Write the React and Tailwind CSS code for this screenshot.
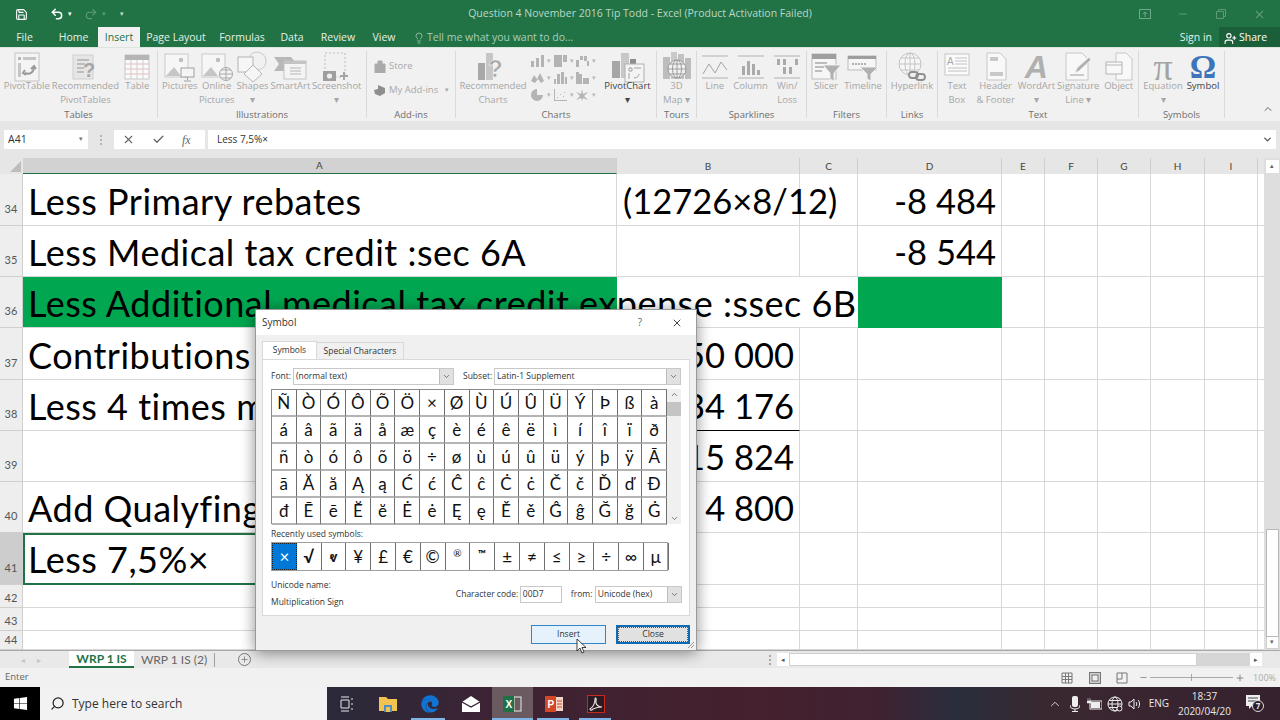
import { Save, Undo2, Redo2, Lightbulb, UserPlus, X, Check, ChevronDown, ChevronUp, Search, Plus, Minus } from 'lucide-react';
import { FaEdge, FaWindows } from 'react-icons/fa';

const UI = "font-['Open_Sans',sans-serif]";
const CALIBRI = "font-['Lato','Noto_Sans',sans-serif]";
const COLS = 'grid grid-cols-[23px_594px_183px_58px_144px_43px_53px_53px_54px_53px_6px]';

function Ico({ children, w = 32, h = 32 }) {
  return (
    <svg width={w} height={h} viewBox={`0 0 ${w} ${h}`} fill="none" stroke="#bcbcbc" strokeWidth="1">
      {children}
    </svg>
  );
}

const PivotTableIcon = () => (
  <Ico>
    <rect x="4" y="2" width="24" height="28" fill="#f4f4f4" stroke="#c4c4c4" />
    <rect x="7" y="6" width="3" height="3" fill="#b8b8b8" stroke="none" />
    <rect x="12" y="6" width="13" height="3" fill="#c6c6c6" stroke="none" />
    <rect x="7" y="12" width="3" height="14" fill="#c6c6c6" stroke="none" />
    <path d="M14 22c5 2 9-1 9-6m-3 2 3-3 2 3M14 19l-2 3 3 2" stroke="#9a9a9a" strokeWidth="2" />
  </Ico>
);
const RecPivotIcon = () => (
  <Ico>
    <rect x="4" y="4" width="20" height="24" fill="#e6e6e6" stroke="#cfcfcf" />
    <path d="M8 9h12M8 13h8M8 17h7M8 21h7" stroke="#bdbdbd" strokeWidth="2" />
    <text x="14" y="26" fontSize="20" fontWeight="700" fill="#a6a6a6" stroke="none" fontFamily="Liberation Sans">?</text>
  </Ico>
);
const TableIcon = () => (
  <Ico>
    <rect x="4" y="4" width="24" height="24" fill="#fafafa" stroke="#c8c8c8" />
    <rect x="4" y="4" width="24" height="5" fill="#b5b5b5" stroke="none" />
    <path d="M4 13h24M4 18h24M4 23h24" stroke="#e3bcbc" />
    <path d="M10 9v19M16 9v19M22 9v19" stroke="#cfcfcf" />
  </Ico>
);
const PicturesIcon = ({ globe }) => (
  <Ico w={36} h={32}>
    <rect x="3" y="3" width="23" height="23" fill="#f6f6f6" stroke="#cacaca" />
    <path d="M4 25l8-9 7 9z" fill="#c6c6c6" stroke="none" />
    <circle cx="19" cy="9" r="2.2" fill="#bdbdbd" stroke="none" />
    {globe ? (
      <g stroke="#a8a8a8">
        <circle cx="27" cy="23" r="6.5" fill="#f4f4f4" />
        <path d="M20.5 23h13M27 16.5v13M22 19h10M22 27h10" />
      </g>
    ) : (
      <g stroke="#a0a0a0">
        <rect x="19" y="17" width="13" height="9" fill="#f4f4f4" />
        <path d="M25.5 26v3M22 30h7" />
      </g>
    )}
  </Ico>
);
const ShapesIcon = () => (
  <Ico w={36} h={32}>
    <rect x="3" y="6" width="15" height="15" fill="#f6f6f6" stroke="#b4b4b4" />
    <path d="M21 19a9 9 0 1 0-7-13" stroke="#c8c8c8" />
    <path d="M18 14l9 9-9 8-9-8z" fill="#f6f6f6" stroke="#b4b4b4" />
  </Ico>
);
const SmartArtIcon = () => (
  <Ico w={36} h={32}>
    <path d="M2 6h17l6 7-6 7H2l5-7z" fill="#b8b8b8" stroke="none" />
    <rect x="12" y="10" width="22" height="18" fill="#f4f4f4" stroke="#c4c4c4" />
    <rect x="12" y="10" width="22" height="3" fill="#c4c4c4" stroke="none" />
    <path d="M18 17h11M18 20h11M18 23h11" stroke="#b4b4b4" />
  </Ico>
);
const ScreenshotIcon = () => (
  <Ico w={36} h={32}>
    <rect x="6" y="2" width="20" height="24" stroke="#bcbcbc" strokeDasharray="2 2" />
    <rect x="4" y="20" width="13" height="10" fill="#9e9e9e" stroke="none" />
    <circle cx="10.5" cy="25" r="2.6" fill="#f1f1f1" stroke="none" />
    <path d="M21 25h8M25 21v8" stroke="#a6a6a6" strokeWidth="2" />
  </Ico>
);
const ChartsIcon = () => (
  <Ico>
    <rect x="1" y="12" width="7" height="17" fill="#a8a8a8" stroke="none" />
    <rect x="9" y="2" width="7" height="27" fill="#c6c6c6" stroke="none" />
    <text x="11" y="26" fontSize="24" fontWeight="700" fill="#a6a6a6" stroke="#f1f1f1" strokeWidth="0.6" fontFamily="Liberation Sans">?</text>
  </Ico>
);
const PivotChartIcon = () => (
  <Ico w={36} h={32}>
    <rect x="2" y="10" width="8" height="17" fill="#a6a6a6" stroke="none" />
    <rect x="11" y="2" width="8" height="25" fill="#c8c8c8" stroke="none" />
    <rect x="20" y="8" width="6" height="10" fill="#8e8e8e" stroke="none" />
    <rect x="15" y="13" width="19" height="18" fill="#f4f4f4" stroke="#b0b0b0" />
    <path d="M19 17h3v3h-3zM24 17h7M19 22v6M24 27c3 0 5-2 5-4" stroke="#a0a0a0" />
  </Ico>
);
const MapIcon = () => (
  <Ico>
    <rect x="2" y="6" width="7" height="22" fill="#bdbdbd" stroke="none" />
    <rect x="10" y="1" width="6" height="27" fill="#c9c9c9" stroke="none" />
    <rect x="17" y="3" width="6" height="25" fill="#c2c2c2" stroke="none" />
    <rect x="24" y="7" width="6" height="21" fill="#bdbdbd" stroke="none" />
    <g stroke="#9c9c9c">
      <circle cx="16" cy="18" r="9" fill="#f1f1f1" />
      <path d="M7 18h18M16 9v18M9 13h14M9 23h14" />
      <ellipse cx="16" cy="18" rx="4.5" ry="9" />
    </g>
  </Ico>
);
const SparkFrame = ({ children }) => (
  <Ico w={28} h={28}>
    <path d="M1 3h26M1 25h26" stroke="#c6c6c6" strokeWidth="1.5" />
    {children}
  </Ico>
);
const LineIcon = () => (
  <SparkFrame>
    <path d="M2 21l6-10 6 9 6-11 6 8" stroke="#a4a4a4" />
  </SparkFrame>
);
const ColumnIcon = () => (
  <SparkFrame>
    <path d="M5 13h3v9H5zM10 8h3v14h-3zM15 11h3v11h-3zM20 17h3v5h-3z" fill="#aaaaaa" stroke="none" />
  </SparkFrame>
);
const WinLossIcon = () => (
  <SparkFrame>
    <path d="M4 6h3v6H4zM10 6h3v6h-3zM22 6h3v6h-3zM16 14h3v7h-3zM10 14h3v7h-3z" fill="#aaaaaa" stroke="none" />
  </SparkFrame>
);
const SlicerIcon = () => (
  <Ico>
    <rect x="2" y="3" width="24" height="25" fill="#f6f6f6" stroke="#bcbcbc" />
    <rect x="2" y="3" width="24" height="5" fill="#9e9e9e" stroke="none" />
    <path d="M5 12h12M5 16h9M5 20h7" stroke="#bcbcbc" strokeWidth="2" />
    <path d="M13 14h18l-7 8v8l-4-2v-6z" fill="#b0b0b0" stroke="#f1f1f1" />
  </Ico>
);
const TimelineIcon = () => (
  <Ico>
    <rect x="1" y="5" width="28" height="14" fill="#f6f6f6" stroke="#bcbcbc" />
    <rect x="1" y="5" width="28" height="3" fill="#9e9e9e" stroke="none" />
    <path d="M5 13h14" stroke="#b0b0b0" strokeWidth="2" strokeDasharray="2 1" />
    <path d="M13 16h18l-7 7v7l-4-2v-5z" fill="#b0b0b0" stroke="#f1f1f1" />
  </Ico>
);
const HyperlinkIcon = () => (
  <Ico>
    <g stroke="#c4c4c4">
      <circle cx="14" cy="13" r="11" fill="#f6f6f6" />
      <path d="M3 13h22M14 2v22M5 7h18M5 19h18" />
      <ellipse cx="14" cy="13" rx="5" ry="11" />
    </g>
    <rect x="13" y="21" width="9" height="6" rx="3" stroke="#8f8f8f" strokeWidth="1.8" fill="#f1f1f1" />
    <rect x="20" y="23" width="9" height="6" rx="3" stroke="#8f8f8f" strokeWidth="1.8" />
  </Ico>
);
const TextBoxIcon = () => (
  <Ico>
    <rect x="4" y="3" width="24" height="21" fill="#fbfbfb" stroke="#c6c6c6" />
    <text x="6" y="14" fontSize="10" fill="#a8a8a8" stroke="none" fontFamily="Liberation Sans">A</text>
    <path d="M14 7h12M14 10h12M14 13h12M7 17h19M7 20h19" stroke="#c0c0c0" />
  </Ico>
);
const HeaderIcon = () => (
  <Ico>
    <path d="M7 2h13l6 6v21H7z" fill="#f8f8f8" stroke="#c6c6c6" />
    <rect x="10" y="6" width="8" height="4" fill="#c8c8c8" stroke="none" />
    <rect x="10" y="21" width="13" height="4" fill="#c8c8c8" stroke="none" />
  </Ico>
);
const SignatureIcon = () => (
  <Ico>
    <path d="M4 2h16l6 6v21H4z" fill="#f8f8f8" stroke="#c6c6c6" />
    <path d="M8 24h14" stroke="#9c9c9c" />
    <path d="M13 22l2-5 12-11 2 3-12 11z" fill="#b0b0b0" stroke="#f1f1f1" />
  </Ico>
);
const ObjectIcon = () => (
  <Ico>
    <path d="M13 2h10l6 6v21H13z" fill="#f8f8f8" stroke="#c6c6c6" />
    <rect x="3" y="11" width="16" height="12" fill="#f8f8f8" stroke="#b6b6b6" />
    <path d="M3 14h16" stroke="#b6b6b6" />
  </Ico>
);
const Glyph = ({ children, className }) => (
  <span className={`flex h-[32px] items-center justify-center leading-none ${className}`}>{children}</span>
);

function MiniChart({ d, fill = '#b4b4b4' }) {
  return (
    <span className="flex items-center gap-[2px]">
      <svg width="15" height="14" viewBox="0 0 15 14">
        <path d={d} fill={fill} />
      </svg>
      <span className="text-[7px] leading-none text-[#b8b8b8]">▾</span>
    </span>
  );
}

const MINI_CHARTS = [
  'M1 7h3v6H1zM6 4h3v9H6zM11 1h3v12h-3z',
  'M1 1h8v12H1zM10 1h4v7h-4z',
  'M1 6h3v7H1zM5 2h3v4H5zM9 2h3v5H9zM12 7h2v5h-2z',
  'M1 10l3-6 3 4 3-6 4 8-3 2-3-4-3 4z',
  'M1 8h2v5H1zM4 3h3v10H4zM8 1h3v12H8zM12 6h2v7h-2z',
  'M1 3h6v10H1zM8 7h6v6H8zM1 1h3v2H1z',
  'M7 1a6 6 0 1 0 6 6H7z',
  'M1 1v12h13v-1H2V1zM4 9h1v1H4zM7 6h1v1H7zM10 8h1v1h-1zM11 4h1v1h-1z',
  'M7 1l1 5 5-2-4 4 4 4-5-2-1 3-1-3-5 2 4-4-4-4 5 2z',
];

const RIBBON = [
  {
    label: 'Tables',
    width: 'w-[158px]',
    buttons: [
      { w: 'w-[54px]', lines: ['PivotTable'], icon: <PivotTableIcon /> },
      { w: 'w-[64px]', lines: ['Recommended', 'PivotTables'], icon: <RecPivotIcon /> },
      { w: 'w-[40px]', lines: ['Table'], icon: <TableIcon /> },
    ],
  },
  {
    label: 'Illustrations',
    width: 'w-[209px]',
    buttons: [
      { w: 'w-[44px]', lines: ['Pictures'], icon: <PicturesIcon /> },
      { w: 'w-[30px]', lines: ['Online', 'Pictures'], icon: <PicturesIcon globe /> },
      { w: 'w-[42px]', lines: ['Shapes', '▾'], icon: <ShapesIcon /> },
      { w: 'w-[34px]', lines: ['SmartArt'], icon: <SmartArtIcon /> },
      { w: 'w-[59px]', lines: ['Screenshot', '▾'], icon: <ScreenshotIcon /> },
    ],
  },
  { label: 'Add-ins', width: 'w-[89px]', custom: 'addins' },
  { label: 'Charts', width: 'w-[201px]', custom: 'charts' },
  {
    label: 'Tours',
    width: 'w-[40px]',
    buttons: [{ w: 'w-[40px]', lines: ['3D', 'Map ▾'], icon: <MapIcon /> }],
  },
  {
    label: 'Sparklines',
    width: 'w-[110px]',
    buttons: [
      { w: 'w-[36px]', lines: ['Line'], icon: <LineIcon /> },
      { w: 'w-[36px]', lines: ['Column'], icon: <ColumnIcon /> },
      { w: 'w-[38px]', lines: ['Win/', 'Loss'], icon: <WinLossIcon /> },
    ],
  },
  {
    label: 'Filters',
    width: 'w-[80px]',
    buttons: [
      { w: 'w-[38px]', lines: ['Slicer'], icon: <SlicerIcon /> },
      { w: 'w-[36px]', lines: ['Timeline'], icon: <TimelineIcon /> },
    ],
  },
  {
    label: 'Links',
    width: 'w-[51px]',
    buttons: [{ w: 'w-[51px]', lines: ['Hyperlink'], icon: <HyperlinkIcon /> }],
  },
  {
    label: 'Text',
    width: 'w-[201px]',
    buttons: [
      { w: 'w-[38px]', lines: ['Text', 'Box'], icon: <TextBoxIcon /> },
      { w: 'w-[40px]', lines: ['Header', '& Footer'], icon: <HeaderIcon /> },
      {
        w: 'w-[42px]',
        lines: ['WordArt', '▾'],
        icon: <Glyph className="font-['Liberation_Sans'] text-[32px] font-bold italic text-[#b0b0b0]">A</Glyph>,
      },
      { w: 'w-[42px]', lines: ['Signature', 'Line ▾'], icon: <SignatureIcon /> },
      { w: 'w-[39px]', lines: ['Object'], icon: <ObjectIcon /> },
    ],
  },
  {
    label: 'Symbols',
    width: 'w-[86px]',
    buttons: [
      {
        w: 'w-[48px]',
        lines: ['Equation', '▾'],
        icon: <Glyph className="font-['Liberation_Serif'] text-[38px] text-[#a4a4a4]">π</Glyph>,
      },
      {
        w: 'w-[32px]',
        lines: ['Symbol'],
        active: true,
        icon: <Glyph className="font-['Liberation_Serif'] text-[33px] font-bold text-[#3e75b8]">Ω</Glyph>,
      },
    ],
  },
];

function RibbonButton({ w, lines, icon, active }) {
  return (
    <div className={`flex flex-col items-center ${w}`}>
      <div className="flex h-[32px] items-center justify-center">{icon}</div>
      <div className={`-mt-[4px] flex flex-col items-center whitespace-nowrap text-[9.5px] leading-[14px] ${active ? 'text-[#444]' : 'text-[#a6a6a6]'}`}>
        {lines.map((l) => (
          <span key={l}>{l}</span>
        ))}
      </div>
    </div>
  );
}

function AddIns() {
  return (
    <div className="flex flex-col gap-[10px] pl-[7px] pt-[8px] text-[9.5px] text-[#a8a8a8]">
      <span className="flex items-center gap-[3px] leading-[14px]">
        <svg width="12" height="13" viewBox="0 0 12 13">
          <path d="M1 4h10v9H1zM4 4V1h4v3" fill="#aaaaaa" stroke="#aaaaaa" />
        </svg>
        Store
      </span>
      <span className="flex items-center gap-[3px] whitespace-nowrap leading-[14px]">
        <svg width="12" height="12" viewBox="0 0 12 12">
          <path d="M4 1l7 3v5l-5 3-5-2-1-4 4-1z" fill="#8e8e8e" />
        </svg>
        My Add-ins
        <span className="ml-[4px] text-[7px]">▾</span>
      </span>
    </div>
  );
}

function Charts() {
  return (
    <div className="flex">
      <RibbonButton w="w-[74px]" lines={['Recommended', 'Charts']} icon={<ChartsIcon />} />
      <div className="grid h-[52px] w-[68px] grid-cols-3 pt-[1px]">
        {MINI_CHARTS.map((d) => (
          <MiniChart key={d} d={d} />
        ))}
      </div>
      <RibbonButton w="w-[59px]" lines={['PivotChart', '▾']} active icon={<PivotChartIcon />} />
    </div>
  );
}

function Ribbon() {
  return (
    <div className={`flex h-[74px] border-t border-[#d9e5dd] bg-[#f1f1f1] ${UI}`}>
      {RIBBON.map((g) => (
        <div key={g.label} className={`relative my-[3px] flex flex-col border-r border-[#dadada] ${g.width}`}>
          <div className="flex min-h-0 flex-1">
            {g.buttons && g.buttons.map((b) => <RibbonButton key={b.lines[0]} {...b} />)}
            {g.custom === 'addins' && <AddIns />}
            {g.custom === 'charts' && <Charts />}
          </div>
          <div className="-mb-[3px] text-center text-[9.5px] leading-[12px] text-[#6e6e6e]">{g.label}</div>
        </div>
      ))}
      <div className="flex flex-1 items-end justify-end pb-[6px] pr-[6px]">
        <ChevronUp size={12} color="#666" />
      </div>
    </div>
  );
}

function TitleBar() {
  return (
    <div className="bg-[#217346]">
      <div className={`grid h-[27px] grid-cols-[200px_1fr_200px] items-center pt-[1px] ${UI}`}>
        <div className="flex items-center text-white">
          <Save size={13} className="ml-[15px]" />
          <Undo2 size={14} strokeWidth={2.5} className="ml-[22px]" />
          <span className="ml-[4px] text-[7px]">▾</span>
          <Redo2 size={14} className="ml-[12px] text-[#5c9a78]" />
          <span className="ml-[4px] text-[7px] text-[#5c9a78]">▾</span>
          <span className="ml-[14px] text-[7px] text-[#c6dccf]">▾</span>
        </div>
        <div className="text-center text-[10.5px] text-[#bcd6c7]">Question 4 November 2016 Tip Todd - Excel (Product Activation Failed)</div>
        <div className="flex items-center justify-end gap-[26px] pr-[14px] text-[#5c9a78]">
          <svg width="12" height="10" viewBox="0 0 12 10" fill="none" stroke="#6fa88a">
            <rect x="0.5" y="0.5" width="11" height="9" />
            <path d="M6 8V3M4 5l2-2 2 2" />
          </svg>
          <Minus size={12} />
          <svg width="12" height="12" viewBox="0 0 12 12" fill="none" stroke="currentColor">
            <path d="M1.5 3.5h7v7h-7zM3.5 3.5v-2h7v7h-2" />
          </svg>
          <X size={13} />
        </div>
      </div>
      <div className={`flex h-[20px] items-stretch text-[10.5px] text-[#e4efe8] ${UI}`}>
        {[
          ['File', 'w-[49px]'],
          ['Home', 'w-[49px]'],
          ['Insert', 'w-[42px] bg-[#f1f1f1] text-[#217346]'],
          ['Page Layout', 'w-[72px]'],
          ['Formulas', 'w-[60px]'],
          ['Data', 'w-[40px]'],
          ['Review', 'w-[52px]'],
          ['View', 'w-[40px]'],
        ].map(([t, c]) => (
          <span key={t} className={`flex items-center justify-center pt-[2px] ${c}`}>
            {t}
          </span>
        ))}
        <span className="ml-[9px] flex items-center gap-[2px] pt-[2px] text-[#a9cdb8]">
          <Lightbulb size={12} strokeWidth={1.5} />
          Tell me what you want to do...
        </span>
        <span className="ml-auto flex items-center pr-[7px] pt-[2px]">Sign in</span>
        <span className="flex w-[61px] items-center gap-[2px] bg-[#1b5e3a] pl-[5px] pt-[2px] text-white">
          <UserPlus size={13} />
          Share
        </span>
      </div>
    </div>
  );
}

function FormulaBar() {
  return (
    <div className={`flex h-[37px] items-start gap-[3px] bg-[#e6e6e6] pl-[4px] pr-[4px] pt-[9px] ${UI}`}>
      <div className="flex h-[19px] w-[84px] items-center justify-between bg-white pl-[4px] pr-[5px] text-[10.5px] text-[#333]">
        A41
        <span className="text-[7px] text-[#777]">▾</span>
      </div>
      <div className="flex h-[19px] w-[19px] flex-col items-center justify-center gap-[2px]">
        <span className="h-[2px] w-[2px] bg-[#b4b4b4]" />
        <span className="h-[2px] w-[2px] bg-[#b4b4b4]" />
        <span className="h-[2px] w-[2px] bg-[#b4b4b4]" />
      </div>
      <div className="ml-[1px] flex h-[19px] w-[91px] items-center gap-[17px] bg-white pl-[8px] text-[#666]">
        <X size={13} />
        <Check size={13} strokeWidth={2.5} />
        <span className="font-['Liberation_Serif'] text-[12px] italic">fx</span>
      </div>
      <div className="flex h-[19px] flex-1 items-center justify-between bg-white pl-[9px] pr-[3px] text-[10px] text-[#333]">
        Less 7,5%×
        <ChevronDown size={11} color="#555" strokeWidth={3} />
      </div>
    </div>
  );
}

const HEAD = ['A', 'B', 'C', 'D', 'E', 'F', 'G', 'H', 'I'];

const ROWS = [
  { n: 34, h: 'h-[52px]', a: 'Less Primary rebates', b: '(12726×8/12)', d: '-8 484' },
  { n: 35, h: 'h-[51px]', a: 'Less Medical tax credit :sec 6A', d: '-8 544' },
  { n: 36, h: 'h-[51px]', a: 'Less Additional medical tax credit expense :ssec 6B', green: true },
  { n: 37, h: 'h-[52px]', a: 'Contributions', bRight: '50 000' },
  { n: 38, h: 'h-[51px]', a: 'Less 4 times m', bRight: '34 176', bLine: true },
  { n: 39, h: 'h-[51px]', bRight: '15 824' },
  { n: 40, h: 'h-[51px]', a: 'Add Qualyfing', bRight: '4 800' },
  { n: 41, h: 'h-[52px]', a: 'Less 7,5%×', selected: true },
  { n: 42, h: 'h-[23px]', small: true },
  { n: 43, h: 'h-[23px]', small: true },
  { n: 44, h: 'h-[19px]', small: true },
];

const cellBase = 'border-b border-r border-[#d8d8d8]';
const big = 'flex items-end whitespace-nowrap pb-[1px] leading-[46px] text-black';
const word = 'text-[36px] tracking-[0.5px]';
const num = 'text-[34.5px]';

function SheetRow({ r }) {
  return (
    <div className={`${COLS} ${r.h} ${CALIBRI}`}>
      <div className={`flex items-end justify-center border-b border-r border-[#cfcfcf] text-[11px] leading-[14px] text-[#555] ${r.small ? 'pb-[2px]' : 'pb-[9px]'} ${r.selected ? 'bg-[#cdcdcd]' : 'bg-[#eeeeee]'}`}>
        {r.n}
      </div>
      <div className={`${big} ${word} ${r.green ? 'border-b border-[#d8d8d8] bg-[#00a650] pl-[5px]' : r.selected ? 'border-2 border-[#217346] pl-[3px]' : `${cellBase} pl-[5px]`}`}>{r.a}</div>
      <div className={`${big} ${num} pl-[6px] pr-[5px] ${r.bRight ? 'justify-end' : 'justify-start'} ${r.green ? 'border-b border-[#d8d8d8]' : r.bLine ? 'border-b border-r border-b-black border-r-[#d8d8d8]' : cellBase}`}>
        {r.b || r.bRight}
      </div>
      <div className={r.green ? 'border-b border-[#d8d8d8]' : cellBase} />
      <div className={`${big} ${num} justify-end pr-[5px] ${r.green ? 'bg-[#00a650]' : cellBase}`}>{r.d}</div>
      {['E', 'F', 'G', 'H', 'I'].map((c) => (
        <div key={c} className={cellBase} />
      ))}
      <div className="border-b border-[#d8d8d8]" />
    </div>
  );
}

function VScroll() {
  return (
    <div className="flex w-[16px] flex-col items-center bg-[#dedede] pb-[1px] pt-[2px]">
      <div className="flex h-[13px] w-[13px] items-center justify-center bg-white text-[7px] text-[#666]">▴</div>
      <div className="flex-1" />
      <div className="h-[108px] w-[13px] border border-[#b8b8b8] bg-white" />
      <div className="flex h-[12px] w-[13px] items-center justify-center border border-t-0 border-[#cfcfcf] bg-white text-[7px] text-[#666]">▾</div>
    </div>
  );
}

function Sheet() {
  return (
    <div className="flex h-[492px] bg-white">
      <div className="w-[1264px]">
        <div className={`${COLS} h-[16px] border-b border-[#9b9b9b] text-[10px] text-[#444] ${CALIBRI}`}>
          <div className="flex items-center justify-center bg-[#e6e6e6] pl-[8px]">
            <svg width="11" height="11" viewBox="0 0 11 11">
              <path d="M11 0v11H0z" fill="#bdbdbd" />
            </svg>
          </div>
          {HEAD.map((c, i) => (
            <div key={c} className={`flex items-center justify-center border-r border-[#cfcfcf] ${i === 0 ? 'border-b border-b-[#217346] bg-[#d2d2d2]' : 'bg-[#e6e6e6]'}`}>
              {c}
            </div>
          ))}
          <div className="bg-[#e6e6e6]" />
        </div>
        {ROWS.map((r) => (
          <SheetRow key={r.n} r={r} />
        ))}
      </div>
      <VScroll />
    </div>
  );
}

function SheetTabs() {
  return (
    <div className={`flex h-[18px] items-center border-t border-[#a8a8a8] bg-[#e9e9e9] ${CALIBRI}`}>
      <div className="flex w-[69px] justify-center gap-[12px] pr-[8px] text-[8px] text-[#c4c4c4]">
        <span>◂</span>
        <span>▸</span>
      </div>
      <div className="flex h-full w-[65px] items-center justify-center border-b-2 border-[#217346] bg-white text-[12px] font-bold text-[#217346]">WRP 1 IS</div>
      <div className="flex h-[14px] w-[81px] items-center justify-center border-r border-[#9f9f9f] text-[12px] text-[#666]">WRP 1 IS (2)</div>
      <div className="ml-[23px] flex h-[13px] w-[13px] items-center justify-center rounded-full border border-[#777] text-[#777]">
        <Plus size={9} />
      </div>
      <div className="ml-[515px] flex w-[8px] flex-col items-center gap-[2px]">
        <span className="h-[2px] w-[2px] bg-[#a8a8a8]" />
        <span className="h-[2px] w-[2px] bg-[#a8a8a8]" />
        <span className="h-[2px] w-[2px] bg-[#a8a8a8]" />
      </div>
      <div className="ml-[3px] flex h-[13px] w-[485px] items-center bg-[#d6d6d6]">
        <span className="flex h-full w-[12px] items-center justify-center bg-white text-[7px] text-[#555]">◂</span>
        <span className="h-full w-[408px] border border-[#d0d0d0] bg-white" />
        <span className="flex-1" />
        <span className="flex h-full w-[12px] items-center justify-center bg-white text-[7px] text-[#555]">▸</span>
      </div>
    </div>
  );
}

function StatusBar() {
  return (
    <div className={`flex h-[19px] items-center bg-[#f1f1f1] pl-[5px] text-[9.5px] text-[#666] ${UI}`}>
      Enter
      <div className="ml-auto flex items-center pr-[4px]">
        <svg width="12" height="12" viewBox="0 0 12 12" fill="none" stroke="#777">
          <path d="M1 1h10v10H1zM1 4.500h10M1 7.500h10M4.500 1v10M7.500 1v10" />
        </svg>
        <svg className="ml-[16px]" width="12" height="12" viewBox="0 0 12 12" stroke="#777">
          <rect x="0.5" y="0.5" width="11" height="11" fill="#d0d0d0" />
          <rect x="3" y="3" width="6" height="6" fill="#f1f1f1" />
        </svg>
        <svg className="ml-[15px]" width="12" height="12" viewBox="0 0 12 12" fill="none" stroke="#777">
          <path d="M1 1h10v10H1zM6 1v6H1" />
        </svg>
        <Minus size={9} className="ml-[11px]" color="#777" />
        <div className="relative mx-[2px] h-[1px] w-[83px] bg-[#a8a8a8]">
          <span className="absolute left-[41px] top-[-3px] h-[7px] w-[1px] bg-[#a8a8a8]" />
        </div>
        <Plus size={10} color="#777" />
        <span className="ml-[8px] text-[9px] text-[#aaa]">100%</span>
      </div>
    </div>
  );
}

const Underline = ({ className }) => <span className={`absolute bottom-0 h-[2px] bg-[#7fb5e6] ${className}`} />;

function Taskbar() {
  return (
    <div className={`flex h-[33px] ${UI}`}>
      <div className="flex w-[40px] items-center justify-center bg-black text-white">
        <FaWindows size={15} />
      </div>
      <div className="flex w-[287px] items-center gap-[7px] bg-[#f2f2f2] pl-[10px] text-[12px] text-[#333]">
        <Search size={15} className="-scale-x-100" color="#222" />
        Type here to search
      </div>
      <div className="flex flex-1 items-center bg-[linear-gradient(90deg,#2a2a3a_0%,#3d2333_18%,#45202e_45%,#3f2231_58%,#2a2e3c_66%,#3a2831_76%,#36212f_100%)] text-white">
        <div className="flex w-[40px] justify-center">
          <svg width="14" height="16" viewBox="0 0 14 16" fill="none" stroke="#e8e8e8">
            <path d="M1 1h8M1 15h8M1 4h8v8H1zM12 2v2M12 7v2M12 12v2" />
          </svg>
        </div>
        <div className="relative flex h-full w-[42px] items-center justify-center">
          <svg width="18" height="16" viewBox="0 0 18 16">
            <path d="M0 1h7l2 2h9v12H0z" fill="#f3c34f" />
            <path d="M5 9h8v7H5z" fill="#4a8fc8" />
            <path d="M7 11h4v5H7z" fill="#f3c34f" />
          </svg>
        </div>
        <div className="relative flex h-full w-[41px] items-center justify-center">
          <FaEdge size={18} color="#1173d4" />
          <Underline className="left-[2px] w-[34px]" />
        </div>
        <div className="flex h-full w-[42px] items-center justify-center">
          <svg width="20" height="16" viewBox="0 0 20 16">
            <path d="M1 6l9-6 9 6v10H1z" fill="#fff" />
            <path d="M1 6l9 5 9-5" fill="none" stroke="#332030" strokeWidth="1.4" />
          </svg>
        </div>
        <div className="relative flex h-full w-[41px] items-center justify-center bg-[#6c5a61]">
          <svg width="19" height="18" viewBox="0 0 19 18">
            <rect x="7" y="2" width="11" height="14" fill="none" stroke="#e4efe8" />
            <path d="M11 2v14" stroke="#e4efe8" />
            <rect x="0" y="1" width="11" height="16" fill="#1e7145" />
            <text x="2.5" y="13" fontSize="10" fontWeight="700" fill="#fff" fontFamily="Liberation Sans">X</text>
          </svg>
          <Underline className="inset-x-0" />
        </div>
        <div className="relative flex h-full w-[42px] items-center justify-center">
          <svg width="19" height="18" viewBox="0 0 19 18">
            <rect x="8" y="2" width="10" height="14" fill="#f0d4c8" />
            <path d="M12 6h5M12 9h5M12 12h5" stroke="#d24726" />
            <rect x="0" y="1" width="11" height="16" fill="#d24726" />
            <text x="2.5" y="13" fontSize="10" fontWeight="700" fill="#fff" fontFamily="Liberation Sans">P</text>
          </svg>
          <Underline className="left-[4px] w-[32px]" />
        </div>
        <div className="relative flex h-full w-[41px] items-center justify-center">
          <svg width="18" height="18" viewBox="0 0 18 18" fill="none">
            <rect x="0.5" y="0.5" width="17" height="17" fill="#2b1b20" stroke="#c8281e" />
            <path d="M3 14c3-2 5-6 5-10 0-2 2-1 1 2-1 4 3 6 6 6-4 0-7 1-9 2-2 2-3 1-3 0z" stroke="#e8e0e0" strokeWidth="1.1" />
          </svg>
          <Underline className="left-[4px] w-[32px]" />
        </div>
        <div className="ml-auto flex items-center text-[#e8e8e8]">
          <ChevronUp size={14} strokeWidth={1.5} />
          <svg className="ml-[8px]" width="10" height="16" viewBox="0 0 10 16" fill="#eee">
            <rect x="2" y="0" width="6" height="11" rx="2" />
            <path d="M0 9c0 3 2 4 5 4s5-1 5-4M5 13v3M2 15.500h6" fill="none" stroke="#eee" />
          </svg>
          <svg className="ml-[7px]" width="15" height="12" viewBox="0 0 15 12">
            <rect x="3" y="3" width="12" height="8" fill="none" stroke="#eee" />
            <rect x="4" y="4" width="9" height="6" fill="#eee" />
            <path d="M1 0v3M3 0v3M0 3h4v2H0z" fill="#eee" stroke="#eee" strokeWidth="0.5" />
          </svg>
          <svg className="ml-[5px]" width="16" height="16" viewBox="0 0 16 16" fill="none" stroke="#eee">
            <circle cx="8" cy="8" r="7" />
            <ellipse cx="8" cy="8" rx="3" ry="7" />
            <path d="M1 8h14M2 4.500h12M2 11.500h12" />
            <circle cx="12.500" cy="12.500" r="2.500" fill="#3a2530" />
          </svg>
          <svg className="ml-[5px]" width="14" height="14" viewBox="0 0 14 14" fill="none" stroke="#eee">
            <path d="M1 5h2l3-3v10L3 9H1zM8 5c1 1 1 3 0 4M10 3c2 2 2 6 0 8" />
          </svg>
          <span className="ml-[7px] text-[10px]">ENG</span>
          <span className="ml-[8px] flex w-[55px] flex-col items-center text-[10px] leading-[15px]">
            <span>18:37</span>
            <span className="whitespace-nowrap">2020/04/20</span>
          </span>
          <span className="relative ml-[14px] mr-[20px] h-[18px] w-[14px]">
            <svg width="14" height="14" viewBox="0 0 14 14">
              <path d="M0 0h14v11H6l-3 3v-3H0z" fill="#eee" />
              <path d="M2 3h10M2 6h10" stroke="#444" />
            </svg>
            <span className="absolute left-[6px] top-[5px] flex h-[12px] w-[12px] items-center justify-center rounded-full border border-[#ddd] bg-[#2c1d28] text-[8px] font-bold">7</span>
          </span>
        </div>
      </div>
    </div>
  );
}

const SYMBOLS = 'ÑÒÓÔÕÖ×ØÙÚÛÜÝÞßàáâãäåæçèéêëìíîïðñòóôõö÷øùúûüýþÿĀāĂăĄąĆćĈĉĊċČčĎďĐđĒēĔĕĖėĘęĚěĜĝĞğĠ'.split('');
const RECENT = [
  { s: '×', c: 'border border-dotted border-[#222] bg-[#0078d7] text-[17px] text-white' },
  { s: '√', c: 'text-[17px] font-bold' },
  { s: 'ⱴ', c: 'text-[15px] font-bold' },
  { s: '¥', c: 'text-[17px]' },
  { s: '£', c: 'text-[17px]' },
  { s: '€', c: 'text-[17px]' },
  { s: '©', c: 'text-[17px]' },
  { s: '®', c: 'pb-[7px] text-[10px]' },
  { s: '™', c: 'pb-[6px] text-[11px] font-bold' },
  { s: '±', c: 'text-[17px]' },
  { s: '≠', c: 'text-[17px]' },
  { s: '≤', c: 'text-[17px]' },
  { s: '≥', c: 'text-[17px]' },
  { s: '÷', c: 'text-[17px]' },
  { s: '∞', c: 'text-[17px]' },
  { s: 'µ', c: 'text-[17px]' },
];

function Combo({ w, children }) {
  return (
    <div className={`flex h-[17px] items-stretch border border-[#c8c8c8] bg-white ${w}`}>
      <span className="flex flex-1 items-center pl-[2px] leading-none">{children}</span>
      <span className="flex w-[14px] items-center justify-center border-l border-[#bdbdbd] bg-[#e1e1e1]">
        <ChevronDown size={9} color="#555" />
      </span>
    </div>
  );
}

function SymbolDialog() {
  return (
    <div className={`absolute left-[255px] top-[309px] flex h-[342px] w-[442px] flex-col border border-[#9a9a9a] bg-[#f0f0f0] text-[8.5px] text-[#333] shadow-[0_2px_14px_rgba(0,0,0,0.45)] ${UI}`}>
      <div className="flex h-[25px] items-center bg-white pl-[6px] pr-[13px] text-[10px]">
        Symbol
        <span className="ml-auto text-[10px] text-[#666]">?</span>
        <X size={12} className="ml-[29px]" color="#444" />
      </div>
      <div className="flex h-[24px] items-end pl-[6px]">
        <span className="flex h-[18px] w-[55px] items-center justify-center border border-b-0 border-[#d9d9d9] bg-white">Symbols</span>
        <span className="flex h-[17px] w-[87px] items-center justify-center border-r border-t border-[#d9d9d9]">Special Characters</span>
      </div>
      <div className="mx-[6px] flex h-[257px] w-[428px] flex-col border border-[#d9d9d9] bg-white pl-[8px]">
        <div className="mt-[8px] flex items-center">
          <span className="w-[22px]">Font:</span>
          <Combo w="w-[161px]">(normal text)</Combo>
          <span className="ml-[9px] w-[31px]">Subset:</span>
          <Combo w="w-[187px]">Latin-1 Supplement</Combo>
        </div>
        <div className="mt-[4px] flex h-[135px] w-[410px]">
          <div className={`grid h-[135px] grid-cols-[repeat(16,24.7px)] grid-rows-[repeat(5,27px)] border-l border-t border-[#8a8a8a] ${CALIBRI}`}>
            {SYMBOLS.map((s, i) => (
              <span key={i} className="flex items-center justify-center border-b-2 border-r border-b-[#b4b4b4] border-r-[#6f6f6f] text-[17px] leading-none text-[#111]">
                {s}
              </span>
            ))}
          </div>
          <div className="flex w-[14px] flex-col items-center bg-[#f0f0f0] py-[1px] text-[#555]">
            <ChevronUp size={9} />
            <span className="mt-[3px] h-[14px] w-full bg-[#c4c4c4]" />
            <ChevronDown size={9} className="mt-auto" />
          </div>
        </div>
        <div className="mt-[4px] leading-[12px]">Recently used symbols:</div>
        <div className={`mt-[2px] grid h-[29px] w-[397px] grid-cols-[repeat(16,24.8px)] border border-[#9f9f9f] ${CALIBRI}`}>
          {RECENT.map(({ s, c }) => (
            <span key={s} className={`flex items-center justify-center border-r border-[#6f6f6f] leading-none text-[#111] ${c}`}>
              {s}
            </span>
          ))}
        </div>
        <div className="mt-[7px] flex h-[32px] items-center">
          <div className="flex flex-col gap-[5px] self-start pt-[1px] leading-[12px]">
            <span>Unicode name:</span>
            <span>Multiplication Sign</span>
          </div>
          <span className="ml-[112px] w-[64px]">Character code:</span>
          <span className="flex h-[17px] w-[42px] items-center border border-[#c8c8c8] pl-[2px]">00D7</span>
          <span className="ml-[9px] w-[24px]">from:</span>
          <Combo w="w-[87px]">Unicode (hex)</Combo>
        </div>
      </div>
      <div className="mt-[9px] flex justify-end gap-[10px] pr-[6px]">
        <span className="flex h-[19px] w-[75px] items-center justify-center border border-[#2f86c9] bg-[#e5f1fb]">Insert</span>
        <span className="flex h-[19px] w-[74px] items-center justify-center border-2 border-[#0f6cb4] bg-[#e1e1e1] outline-1 -outline-offset-3 outline-dotted outline-[#555]">Close</span>
      </div>
      <svg className="absolute bottom-[1px] right-[1px]" width="8" height="8" viewBox="0 0 8 8" stroke="#999">
        <path d="M7 1L1 7M7 4L4 7" />
      </svg>
      <svg className="absolute left-[320px] top-[329px]" width="10" height="15" viewBox="0 0 10 15">
        <path d="M1 0v12l3-3 2 5 2-1-2-4.500h4z" fill="#fff" stroke="#111" strokeWidth="0.8" />
      </svg>
    </div>
  );
}

export default function App() {
  return (
    <div className="relative flex h-[720px] w-[1280px] flex-col overflow-hidden">
      <TitleBar />
      <Ribbon />
      <FormulaBar />
      <Sheet />
      <SheetTabs />
      <StatusBar />
      <Taskbar />
      <SymbolDialog />
    </div>
  );
}
